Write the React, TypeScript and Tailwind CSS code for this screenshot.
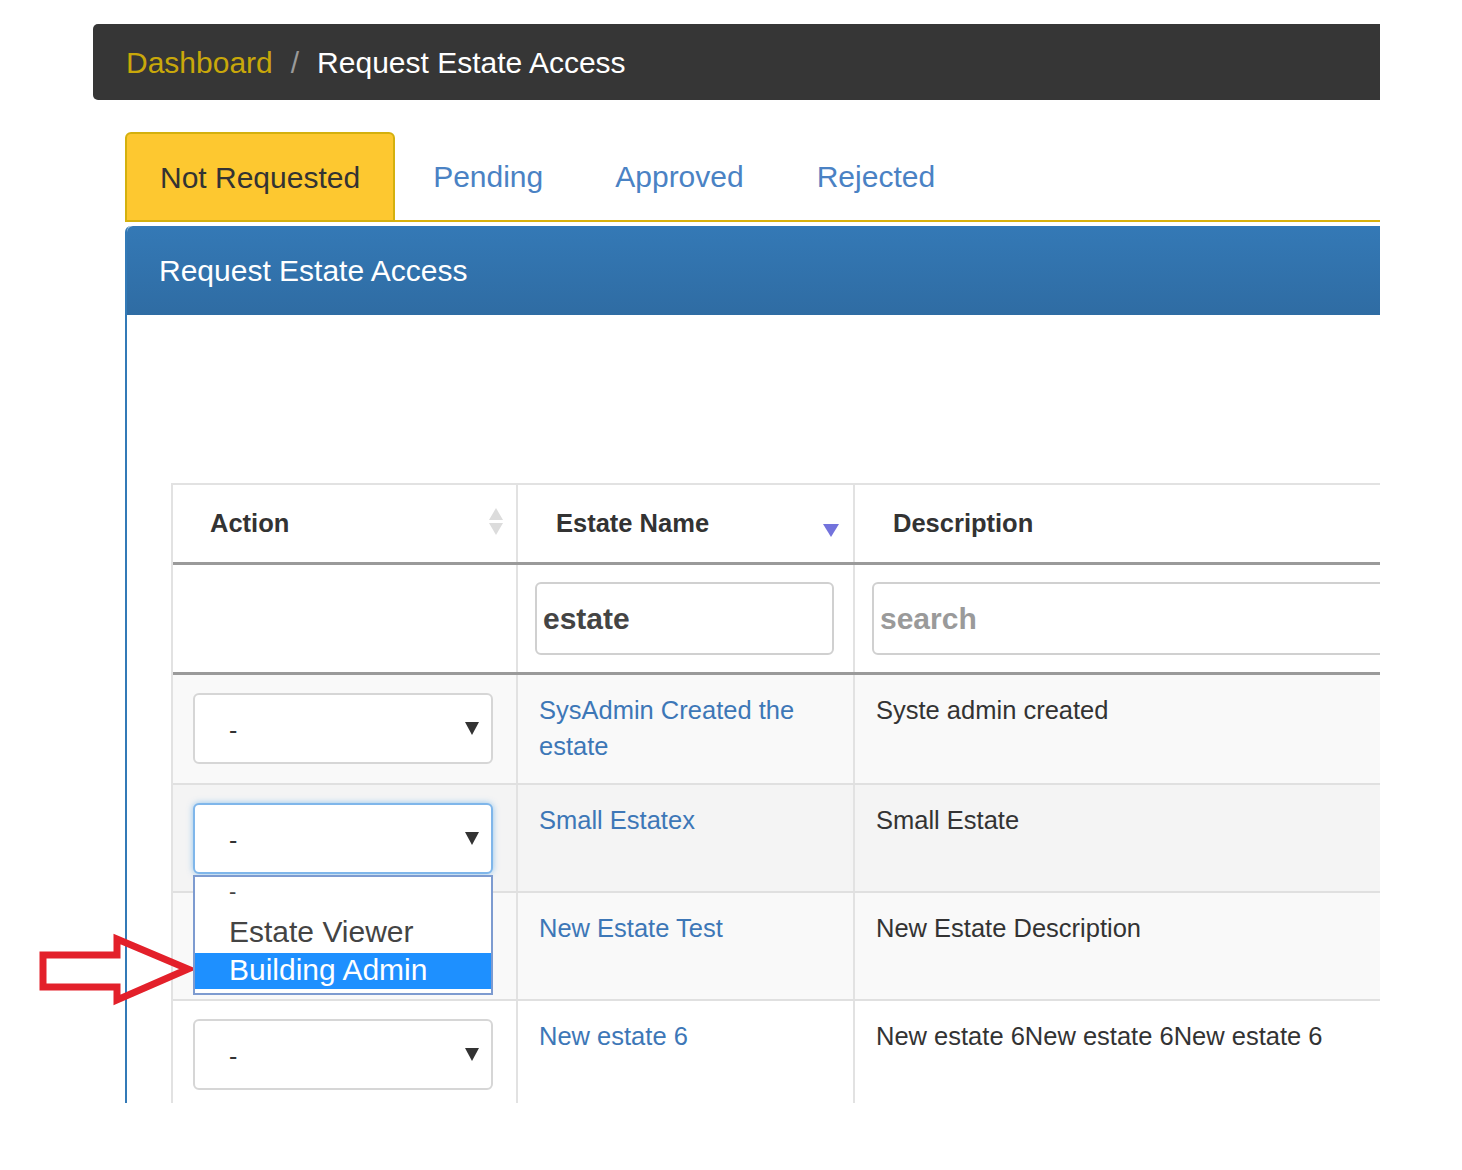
import React from "react";

const rows = [
  { name: ["SysAdmin Created the", "estate"], desc: "Syste admin created", bg: "bg-[#f9f9f9]" },
  { name: ["Small Estatex"], desc: "Small Estate", bg: "bg-[#f4f4f4]", focused: true },
  { name: ["New Estate Test"], desc: "New Estate Description", bg: "bg-[#f9f9f9]", hideSelect: true },
  { name: ["New estate 6"], desc: "New estate 6New estate 6New estate 6", bg: "bg-white" },
];

function SelectBox({ focused }: { focused?: boolean }) {
  return (
    <div
      className={`flex h-[71px] w-[300px] items-center justify-between rounded-[6px] border-2 bg-white pl-[34px] pr-[12px] ${
        focused ? "border-[#7fb6ea] shadow-[0_0_6px_rgba(102,175,233,0.7)]" : "border-[#d6d6d6]"
      }`}
    >
      <span className="pt-[4px] text-[25px] text-[#333]">-</span>
      <span className="h-0 w-0 border-x-[7px] border-t-[13px] border-x-transparent border-t-[#333]" />
    </div>
  );
}

export default function App() {
  return (
    <div className="relative h-[1170px] w-[1462px] bg-white font-['Liberation_Sans',Arial,sans-serif]">
      <div className="pl-[93px] pt-[24px]">
        <div className="h-[1079px] w-[1287px] overflow-hidden">
          {/* Breadcrumb */}
          <div className="flex h-[76px] items-center rounded-l-[5px] bg-[#363636] px-[33px] text-[30px]">
            <span className="text-[#c9a80a]">Dashboard</span>
            <span className="px-[18px] text-[#9a9a9a]">/</span>
            <span className="text-white">Request Estate Access</span>
          </div>

          {/* Tabs */}
          <div className="ml-[32px] mt-[32px] flex h-[90px] items-stretch border-b-2 border-[#d9b10c]">
            <div className="-mb-[2px] flex h-[90px] items-center rounded-t-[6px] border-2 border-[#d4b00e] bg-[#fdc830] px-[33px] text-[30px] text-[#333]">
              Not Requested
            </div>
            <div className="flex items-center pl-[38px] pr-[36px] text-[30px] text-[#4a82c4]">Pending</div>
            <div className="flex items-center px-[36px] text-[30px] text-[#4a82c4]">Approved</div>
            <div className="flex items-center px-[37px] text-[30px] text-[#4a82c4]">Rejected</div>
          </div>

          {/* Panel */}
          <div className="ml-[32px] mt-[4px] h-[900px] rounded-tl-[6px] border-l-2 border-[#337ab7]">
            <div className="flex h-[89px] items-center rounded-tl-[6px] bg-gradient-to-b from-[#3479b6] to-[#2f6ca3] pl-[32px] text-[30px] text-white">
              Request Estate Access
            </div>

            <div className="pl-[44px] pt-[168px]">
              <div className="border-l-2 border-t-2 border-[#e2e2e2]">
                {/* Header */}
                <div className="grid h-[80px] grid-cols-[345px_337px_1fr] border-b-[3px] border-[#9a9a9a] text-[25.5px] font-bold text-[#333]">
                  <div className="relative flex items-center border-r-2 border-[#e2e2e2] pl-[37px]">
                    Action
                    <div className="absolute right-[13px] top-[23px] flex flex-col items-center gap-[3px]">
                      <span className="h-0 w-0 border-x-[7px] border-b-[12px] border-x-transparent border-b-[#dcdcdc]" />
                      <span className="h-0 w-0 border-x-[7px] border-t-[12px] border-x-transparent border-t-[#dcdcdc]" />
                    </div>
                  </div>
                  <div className="relative flex items-center border-r-2 border-[#e2e2e2] pl-[38px]">
                    Estate Name
                    <span className="absolute right-[14px] top-[39px] h-0 w-0 border-x-[8px] border-t-[13px] border-x-transparent border-t-[#7373dc]" />
                  </div>
                  <div className="flex items-center pl-[38px]">Description</div>
                </div>

                {/* Filter row */}
                <div className="grid h-[110px] grid-cols-[345px_337px_1fr] border-b-[3px] border-[#9a9a9a]">
                  <div className="border-r-2 border-[#e2e2e2]" />
                  <div className="border-r-2 border-[#e2e2e2] pl-[17px] pt-[17px]">
                    <div className="flex h-[73px] w-[299px] items-center rounded-[6px] border-2 border-[#d0d0d0] bg-white pl-[6px] text-[30px] font-bold text-[#444]">
                      estate
                    </div>
                  </div>
                  <div className="pl-[17px] pt-[17px]">
                    <div className="flex h-[73px] w-[600px] items-center rounded-[6px] border-2 border-[#d0d0d0] bg-white pl-[6px] text-[30px] font-bold text-[#9a9a9a]">
                      search
                    </div>
                  </div>
                </div>

                {/* Body rows */}
                {rows.map((r, i) => (
                  <div
                    key={i}
                    className={`grid h-[108px] grid-cols-[345px_337px_1fr] ${i > 0 ? "border-t-2 border-[#e0e0e0]" : ""} ${r.bg}`}
                  >
                    <div className="relative border-r-2 border-[#e2e2e2] pl-[20px] pt-[18px]">
                      {!r.hideSelect && <SelectBox focused={r.focused} />}
                      {r.focused && (
                        <div className="absolute left-[20px] top-[90px] z-10 w-[300px] border-2 border-[#7d9bd0] bg-white pb-[4px] text-[30px] text-[#444]">
                          <div className="h-[36px] pl-[34px] pt-[3px] text-[22px] leading-[24px]">-</div>
                          <div className="h-[40px] pl-[34px] leading-[38px]">Estate Viewer</div>
                          <div className="h-[36px] bg-[#1e90ff] pl-[34px] leading-[34px] text-white">Building Admin</div>
                        </div>
                      )}
                    </div>
                    <div className="border-r-2 border-[#e2e2e2] pl-[21px] pt-[17px] text-[25.5px] leading-[36px] text-[#3d77b7]">
                      {r.name.map((n) => (
                        <div key={n}>{n}</div>
                      ))}
                    </div>
                    <div className="pl-[21px] pt-[17px] text-[25.5px] leading-[36px] text-[#333]">{r.desc}</div>
                  </div>
                ))}
              </div>
            </div>
          </div>
        </div>
      </div>

      {/* Red annotation arrow */}
      <svg className="absolute left-[36px] top-[930px]" width="162" height="82" viewBox="36 930 162 82">
        <polygon
          points="43,955 117,955 117,939 188,969 117,1000 117,987 43,987"
          fill="none"
          stroke="#e3202a"
          strokeWidth="7"
          strokeLinejoin="miter"
        />
      </svg>
    </div>
  );
}
